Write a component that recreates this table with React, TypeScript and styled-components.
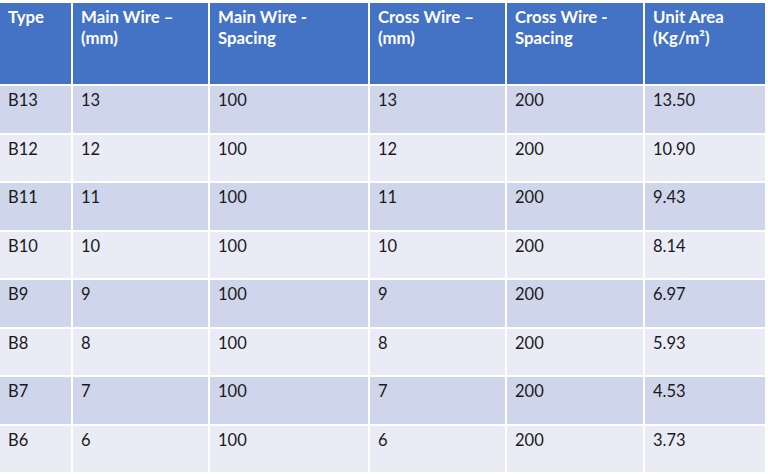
import React from "react";
import styled, { createGlobalStyle } from "styled-components";

const Global = createGlobalStyle`
  html, body { margin: 0; padding: 0; background: #ffffff; }
  body { width: 768px; height: 474px; overflow: hidden; }
`;

const Page = styled.div`
  padding: 3px 3px 0 0;
  background: #ffffff;
`;

const Grid = styled.div`
  display: grid;
  grid-template-columns: 71px 135px 158px 135px 136px 120px;
  grid-template-rows: 81px repeat(8, 46.5px);
  gap: 2px;
  background: #ffffff;
  font-family: "Lato", "Open Sans", sans-serif;
`;

const HeadCell = styled.div`
  background: #4472c4;
  color: #ffffff;
  font-weight: 700;
  font-size: 16.8px;
  line-height: 21px;
  padding: 3px 6px 0 8px;
`;

const Cell = styled.div<{ $odd: boolean }>`
  background: ${(p) => (p.$odd ? "#cfd5ea" : "#e9ebf5")};
  color: #1a1a1a;
  font-size: 16.5px;
  line-height: 21px;
  padding: 4px 6px 0 8px;
`;

const headers: React.ReactNode[] = [
  "Type",
  <>Main Wire –<br />(mm)</>,
  <>Main Wire -<br />Spacing</>,
  <>Cross Wire –<br />(mm)</>,
  <>Cross Wire -<br />Spacing</>,
  <>Unit Area<br />(Kg/m²)</>,
];

const rows = [
  ["B13", "13", "100", "13", "200", "13.50"],
  ["B12", "12", "100", "12", "200", "10.90"],
  ["B11", "11", "100", "11", "200", "9.43"],
  ["B10", "10", "100", "10", "200", "8.14"],
  ["B9", "9", "100", "9", "200", "6.97"],
  ["B8", "8", "100", "8", "200", "5.93"],
  ["B7", "7", "100", "7", "200", "4.53"],
  ["B6", "6", "100", "6", "200", "3.73"],
];

export default function App() {
  return (
    <Page>
      <Global />
      <Grid>
        {headers.map((h, i) => (
          <HeadCell key={i}>{h}</HeadCell>
        ))}
        {rows.map((r, ri) =>
          r.map((c, ci) => (
            <Cell key={`${ri}-${ci}`} $odd={ri % 2 === 0}>
              {c}
            </Cell>
          ))
        )}
      </Grid>
    </Page>
  );
}
